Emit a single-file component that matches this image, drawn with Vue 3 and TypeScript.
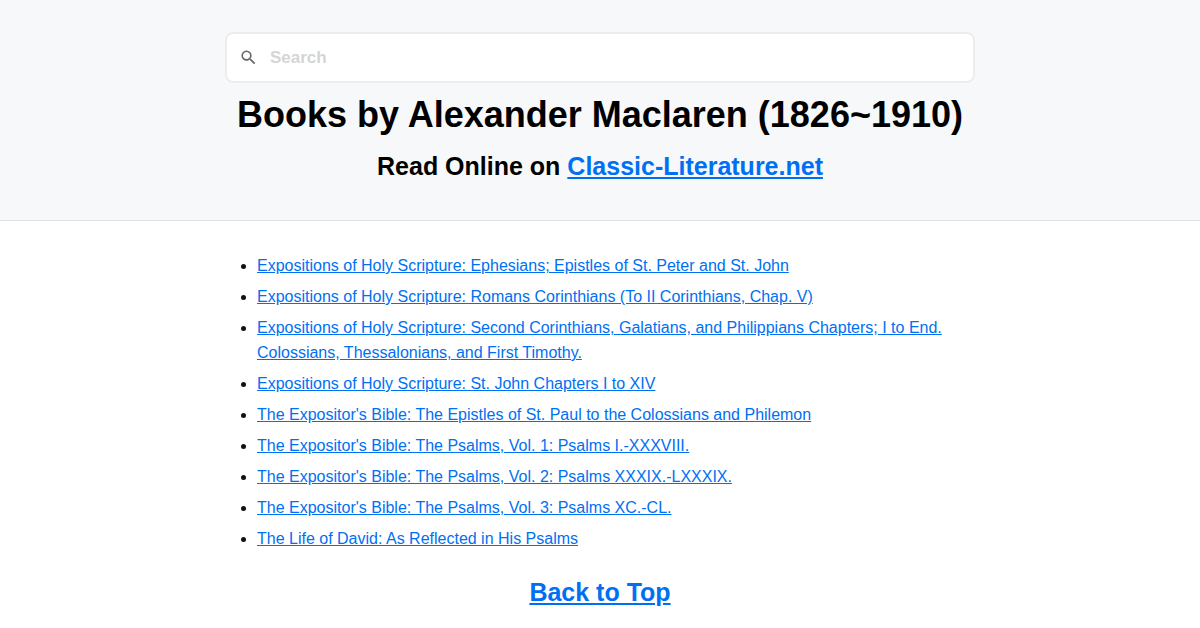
<script setup lang="ts">
import { ref } from 'vue'

const query = ref<string>('')

const books: string[] = [
  'Expositions of Holy Scripture: Ephesians; Epistles of St. Peter and St. John',
  'Expositions of Holy Scripture: Romans Corinthians (To II Corinthians, Chap. V)',
  'Expositions of Holy Scripture: Second Corinthians, Galatians, and Philippians Chapters; I to End. Colossians, Thessalonians, and First Timothy.',
  'Expositions of Holy Scripture: St. John Chapters I to XIV',
  "The Expositor's Bible: The Epistles of St. Paul to the Colossians and Philemon",
  "The Expositor's Bible: The Psalms, Vol. 1: Psalms I.-XXXVIII.",
  "The Expositor's Bible: The Psalms, Vol. 2: Psalms XXXIX.-LXXXIX.",
  "The Expositor's Bible: The Psalms, Vol. 3: Psalms XC.-CL.",
  'The Life of David: As Reflected in His Psalms',
]
</script>

<template>
  <div id="top" class="page">
    <header class="hero">
      <div class="container">
        <form class="search" role="search" @submit.prevent>
          <label class="search-label" for="search" aria-label="Search">
            <svg class="search-icon" viewBox="0 0 24 24" aria-hidden="true">
              <path
                d="M15.5 14h-.79l-.28-.27A6.471 6.471 0 0 0 16 9.5 6.5 6.5 0 1 0 9.5 16c1.61 0 3.09-.59 4.23-1.57l.27.28v.79l5 4.99L20.49 19l-4.99-5zm-6 0C7.01 14 5 11.99 5 9.5S7.01 5 9.5 5 14 7.01 14 9.5 11.99 14 9.5 14z"
              />
            </svg>
          </label>
          <input id="search" v-model="query" type="text" placeholder="Search" autocomplete="off" />
        </form>
        <h1>Books by Alexander Maclaren (1826~1910)</h1>
        <h2>Read Online on <a href="#top">Classic-Literature.net</a></h2>
      </div>
    </header>
    <main class="container content">
      <ul>
        <li v-for="book in books" :key="book"><a href="#top">{{ book }}</a></li>
      </ul>
      <h2><a href="#top">Back to Top</a></h2>
    </main>
  </div>
</template>

<style>
body {
  margin: 0;
  background: #fff;
}
</style>

<style scoped>
.page {
  color: #000;
  font-family: 'Liberation Sans', Arial, sans-serif;
  font-size: 16px;
  line-height: 25px;
}

.hero {
  padding: 32px 16px 36px;
  border-bottom: 1px solid #dfe2e6;
  background: #f7f8fa;
}

.container {
  box-sizing: border-box;
  max-width: 750px;
  margin: 0 auto;
}

.search {
  display: flex;
  align-items: center;
  box-sizing: border-box;
  min-height: 51px;
  border: 2px solid #ededed;
  border-radius: 8px;
  background: #fff;
}

.search-label {
  display: flex;
  padding: 0 12px;
}

.search-icon {
  width: 19px;
  height: 19px;
  fill: #666;
}

input {
  flex: 1;
  min-width: 0;
  padding: 0;
  border: 0;
  outline: 0;
  background: transparent;
  color: #000;
  font: bold 17px/25px 'Liberation Sans', Arial, sans-serif;
}

input::placeholder {
  color: #d5d5d5;
  opacity: 1;
}

h1,
h2 {
  margin: 0;
  text-align: center;
}

h1 {
  margin-top: 8px;
  font-size: 36px;
  line-height: 48px;
}

h2 {
  margin-top: 10px;
  font-size: 25px;
  line-height: 35px;
}

a {
  color: #0070f3;
}

.content {
  padding: 32px 0 16px;
}

ul {
  display: grid;
  gap: 6px;
  margin: 0;
  padding: 0 0 0 32px;
  color: #111;
}

.content h2 {
  margin-top: 24px;
}
</style>
